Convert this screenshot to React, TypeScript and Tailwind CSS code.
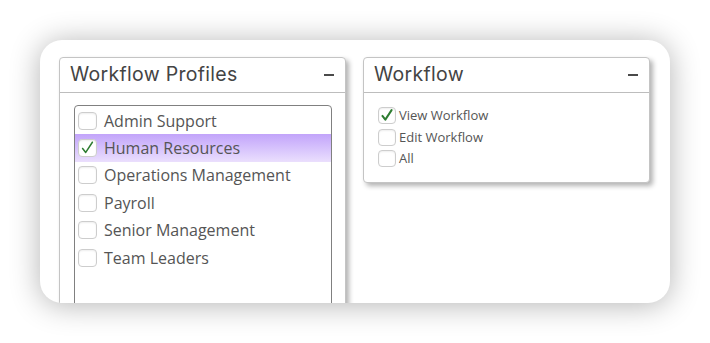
import React from 'react';

const profiles = [
  { label: 'Admin Support', checked: false },
  { label: 'Human Resources', checked: true },
  { label: 'Operations Management', checked: false },
  { label: 'Payroll', checked: false },
  { label: 'Senior Management', checked: false },
  { label: 'Team Leaders', checked: false },
];

const permissions = [
  { label: 'View Workflow', checked: true },
  { label: 'Edit Workflow', checked: false },
  { label: 'All', checked: false },
];

function Check({ bold }: { bold?: boolean }) {
  return (
    <svg viewBox="0 0 18 18" className="h-full w-full">
      <path
        d="M3.5 9.5 L7 14 L14.5 2.5"
        fill="none"
        stroke="#2e7d32"
        strokeWidth={bold ? 2.4 : 1.7}
        strokeLinecap="round"
        strokeLinejoin="round"
      />
    </svg>
  );
}

function Box({ checked, size, bold }: { checked: boolean; size: string; bold?: boolean }) {
  return (
    <span
      className={`${size} shrink-0 rounded-[4px] border border-[#cdcdcd] bg-white shadow-[inset_0_1px_2px_rgba(0,0,0,0.07)]`}
    >
      {checked && <Check bold={bold} />}
    </span>
  );
}

function PanelHeader({ title }: { title: string }) {
  return (
    <div className="flex h-[35px] items-center justify-between border-b border-[#bdbdbd] pl-[10px] pr-[11px]">
      <h2 className="font-['Inter',sans-serif] text-[19.5px] font-normal tracking-[0.3px] text-[#444]">
        {title}
      </h2>
      <span className="h-[2px] w-[10px] bg-[#4a4a4a]" />
    </div>
  );
}

export default function App() {
  return (
    <div className="h-[343px] w-[710px] bg-white pl-[40px] pt-[40px]">
      <div className="flex h-[263px] w-[630px] items-start gap-[17px] overflow-hidden rounded-[22px] bg-white pl-[19px] pt-[17px] shadow-[0_2px_30px_rgba(0,0,0,0.3)]">
        {/* Workflow Profiles */}
        <section className="h-[300px] w-[287px] shrink-0 rounded-[4px] border border-[#c4c4c4] bg-white shadow-[3px_3px_5px_rgba(0,0,0,0.3)]">
          <PanelHeader title="Workflow Profiles" />
          <div className="pl-[14px] pr-[13px] pt-[12px]">
            <ul className="h-[240px] rounded-[4px] border border-[#808080] pt-[1px] font-['Open_Sans',sans-serif] text-[16px] text-[#555]">
              {profiles.map((p) => (
                <li
                  key={p.label}
                  className={`flex h-[27.4px] items-center gap-[7px] pl-[3px] ${
                    p.checked ? 'bg-gradient-to-b from-[#c2a4fa] to-[#ebdffd]' : ''
                  }`}
                >
                  <Box checked={p.checked} size="h-[18px] w-[19px]" />
                  <span>{p.label}</span>
                </li>
              ))}
            </ul>
          </div>
        </section>

        {/* Workflow */}
        <section className="w-[287px] shrink-0 rounded-[4px] border border-[#c4c4c4] bg-white shadow-[3px_3px_5px_rgba(0,0,0,0.3)]">
          <PanelHeader title="Workflow" />
          <ul className="px-[14px] pb-[12px] pt-[12px] font-['Open_Sans',sans-serif] text-[13px] text-[#555]">
            {permissions.map((p) => (
              <li key={p.label} className="flex h-[21.5px] items-center gap-[3px]">
                <Box checked={p.checked} size="h-[17px] w-[18px]" bold />
                <span>{p.label}</span>
              </li>
            ))}
          </ul>
        </section>
      </div>
    </div>
  );
}
